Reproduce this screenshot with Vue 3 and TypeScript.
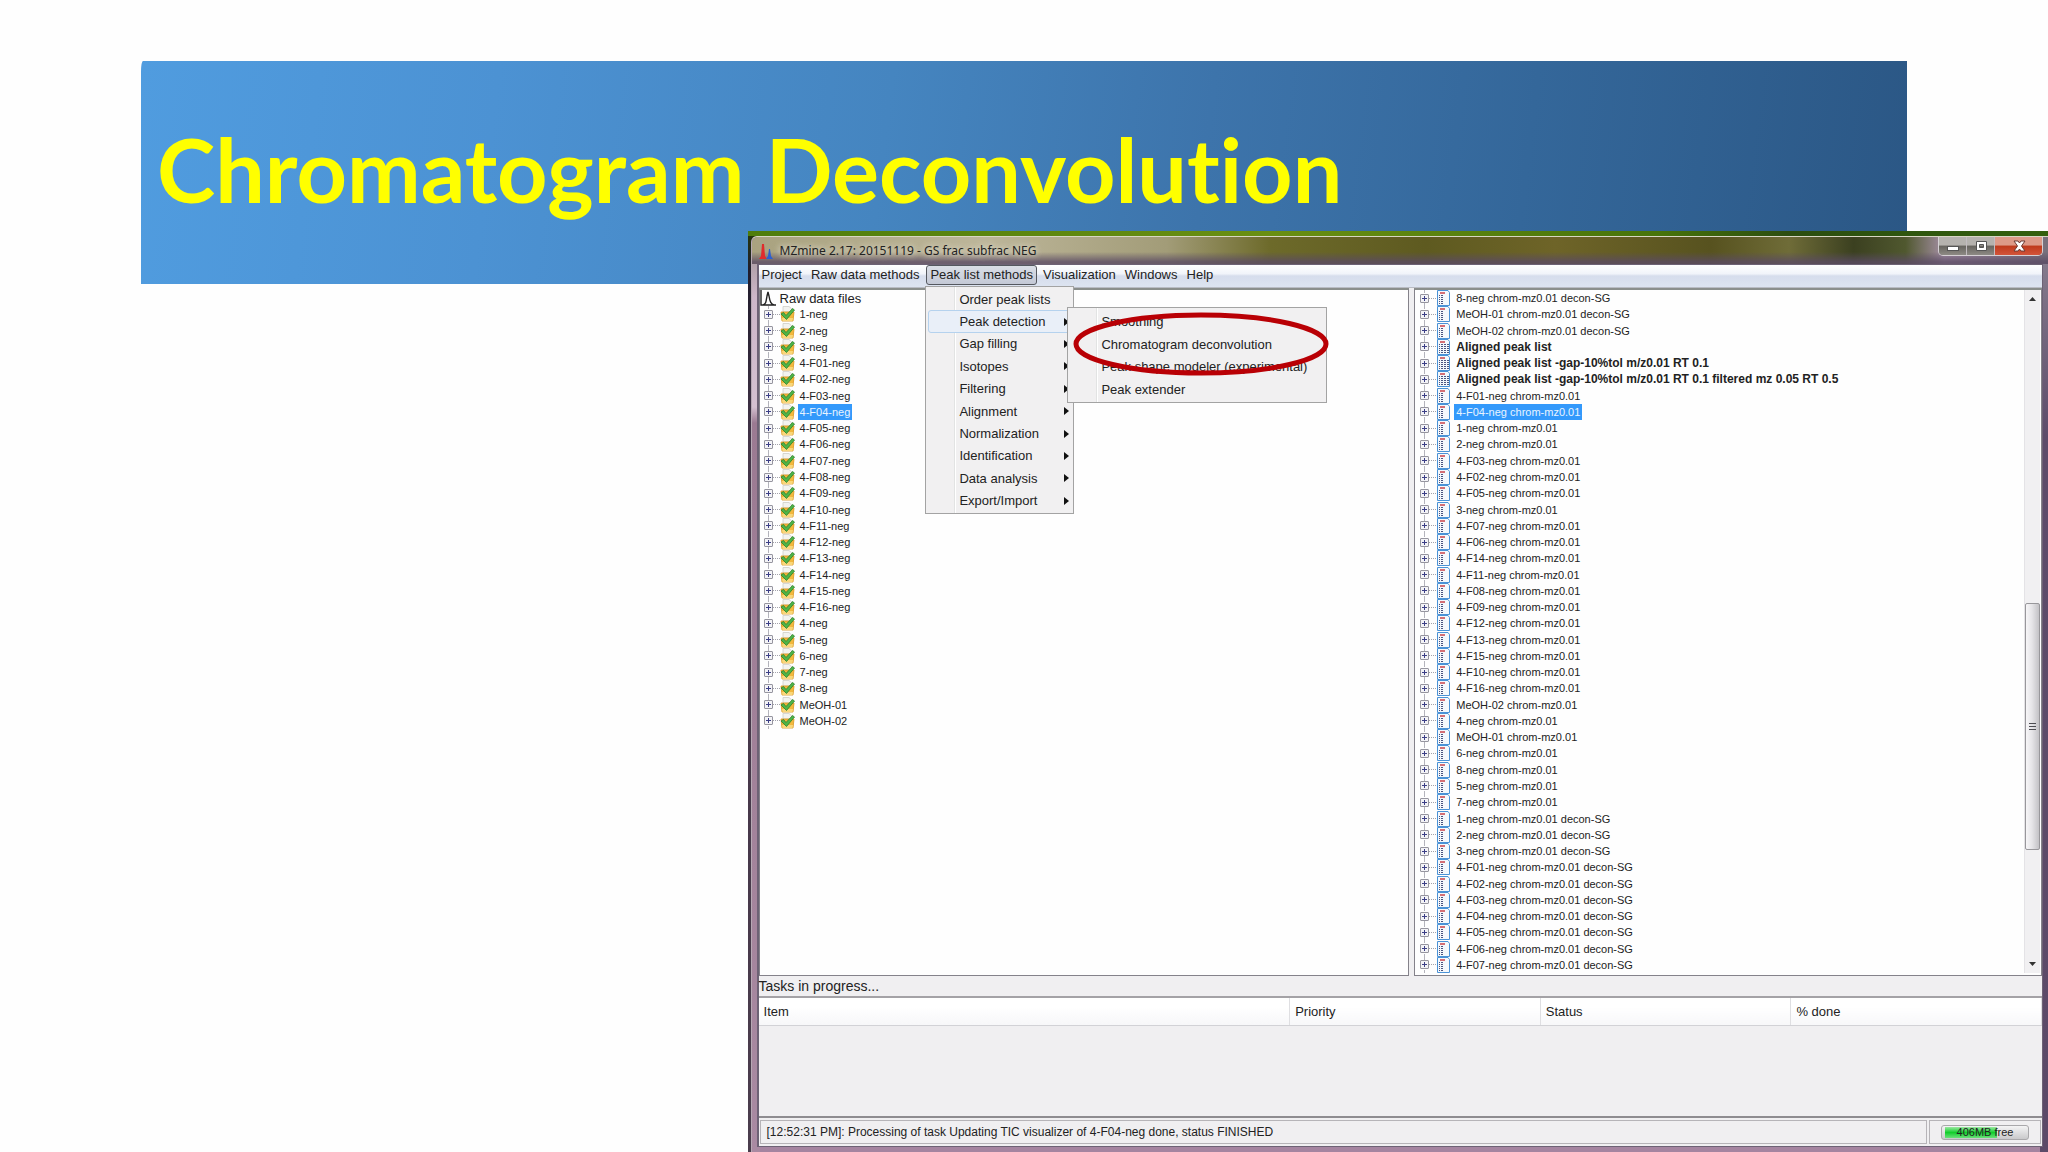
<script setup lang="ts">
import { ref } from 'vue'

interface PeakList {
  name: string
  aligned?: boolean
}

const rawFiles: string[] = [
  '1-neg', '2-neg', '3-neg',
  '4-F01-neg', '4-F02-neg', '4-F03-neg', '4-F04-neg', '4-F05-neg', '4-F06-neg',
  '4-F07-neg', '4-F08-neg', '4-F09-neg', '4-F10-neg', '4-F11-neg', '4-F12-neg',
  '4-F13-neg', '4-F14-neg', '4-F15-neg', '4-F16-neg',
  '4-neg', '5-neg', '6-neg', '7-neg', '8-neg', 'MeOH-01', 'MeOH-02',
]

const chrom = (sample: string): PeakList => ({ name: `${sample} chrom-mz0.01` })
const decon = (sample: string): PeakList => ({ name: `${sample} chrom-mz0.01 decon-SG` })

const peakLists: PeakList[] = [
  ...['8-neg', 'MeOH-01', 'MeOH-02'].map(decon),
  { name: 'Aligned peak list', aligned: true },
  { name: 'Aligned peak list -gap-10%tol m/z0.01 RT 0.1', aligned: true },
  { name: 'Aligned peak list -gap-10%tol m/z0.01 RT 0.1 filtered mz 0.05 RT 0.5', aligned: true },
  ...[
    '4-F01-neg', '4-F04-neg', '1-neg', '2-neg', '4-F03-neg', '4-F02-neg', '4-F05-neg', '3-neg',
    '4-F07-neg', '4-F06-neg', '4-F14-neg', '4-F11-neg', '4-F08-neg', '4-F09-neg', '4-F12-neg',
    '4-F13-neg', '4-F15-neg', '4-F10-neg', '4-F16-neg', 'MeOH-02', '4-neg', 'MeOH-01', '6-neg',
    '8-neg', '5-neg', '7-neg',
  ].map(chrom),
  ...[
    '1-neg', '2-neg', '3-neg', '4-F01-neg', '4-F02-neg', '4-F03-neg', '4-F04-neg', '4-F05-neg',
    '4-F06-neg', '4-F07-neg',
  ].map(decon),
]

const menus: string[] = ['Project', 'Raw data methods', 'Peak list methods', 'Visualization', 'Windows', 'Help']
const methodItems: string[] = [
  'Order peak lists', 'Peak detection', 'Gap filling', 'Isotopes', 'Filtering',
  'Alignment', 'Normalization', 'Identification', 'Data analysis', 'Export/Import',
]
const detectionItems: string[] = [
  'Smoothing', 'Chromatogram deconvolution', 'Peak shape modeler (experimental)', 'Peak extender',
]

const openMenu = ref('Peak list methods')
const hovered = ref('Peak detection')
const selectedFile = ref('4-F04-neg')
const selectedList = ref('4-F04-neg chrom-mz0.01')
const rowMarks: number[] = [5, 7, 9, 11, 13]
</script>

<template>
  <main class="slide">
    <header class="banner">
      <h1>Chromatogram Deconvolution</h1>
    </header>

    <section class="desktop" aria-label="MZmine">
      <div class="window">
        <div class="titlebar">
          <svg class="logo" viewBox="0 0 14 16" aria-hidden="true">
            <path d="M0 16 L2 13 L3 1 H5 L6 13 L8 16 Z" fill="#e02c2c" />
            <path d="M7 16 L9 13 L10 6 H11 L12 13 L14 16 Z" fill="#2c5fd0" />
          </svg>
          <span class="caption">MZmine 2.17: 20151119 - GS frac subfrac NEG</span>
          <div class="controls">
            <button type="button" class="control" aria-label="Minimize">
              <svg viewBox="0 0 16 12"><rect x="2.500" y="6.500" width="11" height="4" fill="#fff" stroke="#555" /></svg>
            </button>
            <button type="button" class="control" aria-label="Maximize">
              <svg viewBox="0 0 16 12"><path d="M3.500 1.500h10v9h-10z M6.500 4.500h4v3h-4z" fill="#fff" fill-rule="evenodd" stroke="#555" /></svg>
            </button>
            <button type="button" class="control close" aria-label="Close">
              <svg viewBox="0 0 16 12"><path d="M3 1h4l1.500 2L10 1h4l-3.500 5L14 11h-4L8.500 9 7 11H3l3.500-5z" fill="#fff" stroke="#6b3a34" /></svg>
            </button>
          </div>
        </div>

        <div class="client">
          <nav class="menubar">
            <div v-for="menu in menus" :key="menu" class="menu">
              <button type="button" class="menu-title" :class="{ open: menu === openMenu }" @click="openMenu = menu">{{ menu }}</button>
              <div v-if="menu === 'Peak list methods' && openMenu === menu" class="popup methods">
                <div v-for="item in methodItems" :key="item" class="entry" :class="{ hot: item === hovered }">
                  <button type="button" @mouseenter="hovered = item">{{ item }}</button>
                  <svg v-if="item !== 'Order peak lists'" class="arrow" viewBox="0 0 5 8"><path d="M0 0L5 4L0 8Z" fill="#111" /></svg>
                </div>
                <div v-if="hovered === 'Peak detection'" class="popup detection">
                  <div v-for="item in detectionItems" :key="item" class="entry">
                    <button type="button">{{ item }}</button>
                  </div>
                  <svg class="highlight" viewBox="0 0 256 64" preserveAspectRatio="none" aria-hidden="true">
                    <ellipse cx="128" cy="32" rx="125" ry="29" fill="none" stroke="#b90005" stroke-width="5" />
                  </svg>
                </div>
              </div>
            </div>
          </nav>

          <div class="panels">
            <ul class="tree files">
              <li class="root">
                <svg class="spectrum" viewBox="0 0 16 16" aria-hidden="true">
                  <path d="M1 0V15H16M3 15C6 14 6 12 7 6L8 2L9 6C10 12 11 14 14 15" fill="none" stroke="#222" stroke-width="1.400" />
                </svg>
                <span>Raw data files</span>
              </li>
              <li v-for="file in rawFiles" :key="file" class="node">
                <button type="button" class="expander" :aria-label="'Expand ' + file" />
                <svg class="icon" viewBox="0 0 15 16" aria-hidden="true">
                  <path d="M3 0.500H9L12 3V6H3Z" fill="#f3f3ef" stroke="#c9c9c0" stroke-width=".7" />
                  <path d="M1 6H14L13 15H2Z" fill="#f3b83c" stroke="#d89520" stroke-width=".8" />
                  <path d="M2 12H13L12.500 15H2.500Z" fill="#f9d77a" />
                  <path d="M1 8L3.500 6.500L6 9.500L12.500 2.500L14.500 4L6.500 13.500Z" fill="#4fb548" stroke="#2c7f2b" stroke-width=".8" />
                </svg>
                <span class="label" :class="{ selected: file === selectedFile }" @click="selectedFile = file">{{ file }}</span>
              </li>
            </ul>

            <div class="lists">
              <ul class="tree">
                <li v-for="list in peakLists" :key="list.name" class="node">
                  <button type="button" class="expander" :aria-label="'Expand ' + list.name" />
                  <svg class="icon" viewBox="0 0 15 16" aria-hidden="true">
                    <path d="M1.500 0.500H12L13.500 2.500V15.500H1.500Z" fill="#f4f8fc" stroke="#4a92d6" />
                    <path d="M4 3H9" stroke="#c4242c" stroke-width="1.300" />
                    <g v-for="y in rowMarks" :key="y" stroke="#4b5580">
                      <path :d="`M3 ${y + 0.5}H4M5 ${y + 0.5}H7`" />
                      <path v-if="list.aligned" :d="`M8 ${y + 0.5}H10M11 ${y + 0.5}H13`" />
                    </g>
                  </svg>
                  <span
                    class="label"
                    :class="{ selected: list.name === selectedList, aligned: list.aligned }"
                    @click="selectedList = list.name"
                  >{{ list.name }}</span>
                </li>
              </ul>
              <div class="scrollbar">
                <svg class="tick" viewBox="0 0 7 4"><path d="M0 4L3.500 0L7 4Z" fill="#333" /></svg>
                <div class="gap-above" />
                <div class="thumb"><i /><i /><i /></div>
                <div class="gap-below" />
                <svg class="tick" viewBox="0 0 7 4"><path d="M0 0L3.500 4L7 0Z" fill="#333" /></svg>
              </div>
            </div>
          </div>

          <h2 class="tasks-title">Tasks in progress...</h2>
          <div class="tasks">
            <table>
              <thead>
                <tr>
                  <th class="item" scope="col">Item</th>
                  <th scope="col">Priority</th>
                  <th scope="col">Status</th>
                  <th scope="col">% done</th>
                </tr>
              </thead>
            </table>
          </div>

          <footer class="statusbar">
            <p class="message">[12:52:31 PM]: Processing of task Updating TIC visualizer of 4-F04-neg done, status FINISHED</p>
            <div class="memory">
              <button type="button" class="meter"><span>406MB free</span></button>
            </div>
          </footer>
        </div>
      </div>
    </section>
  </main>
</template>

<style>
body {
  background: #fefefe;
}
</style>

<style scoped>
* {
  box-sizing: border-box;
}

button {
  margin: 0;
  padding: 0;
  border: 0;
  background: none;
  font: inherit;
  color: inherit;
}

.slide {
  display: flex;
  flex-direction: column;
  min-height: 100vh;
  padding-top: 61px;
  overflow: hidden;
  font-family: "Liberation Sans", Arial, sans-serif;
  font-size: 13px;
  color: #222;
}

.banner {
  display: flex;
  align-items: center;
  flex: none;
  height: 223px;
  margin: 0 141px;
  padding: 0 16px 8px;
  border-top-left-radius: 2px 10px;
  background: linear-gradient(97deg, #509cdf 0%, #4c92d3 20%, #4585c0 42%, #3d74ab 60%, #34679a 78%, #2b5785 100%);
}

h1 {
  margin: 0;
  font-family: Lato, sans-serif;
  font-size: 88px;
  font-weight: 700;
  font-variant-ligatures: none;
  line-height: 112px;
  white-space: nowrap;
  color: #ff0;
}

.desktop {
  position: relative;
  display: flex;
  flex: 1;
  margin-top: -53px;
  margin-left: 36.500%;
  padding: 5px 0 0 3px;
  background: linear-gradient(90deg, #4f7d0c 0%, #6a8f12 40%, #48740a 70%, #2c4d10 80%, #33600d 100%) top / 100% 5px no-repeat,
    linear-gradient(#26380a 0, #201c2c 40px, #433448 220px, #4a3c4c 100%);
}

.window {
  display: flex;
  flex-direction: column;
  flex: 1;
  min-width: 0;
  padding: 0 5px 5px;
  border-top: 1px solid #d8d6c4;
  border-left: 1px solid #b7a9b4;
  border-top-left-radius: 6px;
  background: linear-gradient(#9a8f90 0, #cdb6c9 60px, #d4c0d0 170px, #9b7a92 186px, #a98aa2 100%) left / 8px 100% no-repeat,
    linear-gradient(#8a8191 0, #5d4c6a 200px, #5c4a68 100%) right / 8px 100% no-repeat,
    #a584a0;
}

.titlebar {
  display: flex;
  align-items: center;
  flex: none;
  height: 27px;
  margin: 0 -5px;
  padding: 0 5px 0 7px;
  border-top-left-radius: 6px;
  background: linear-gradient(transparent 55%, #5a4a64cc 92%),
    linear-gradient(90deg, #a9a27f 0%, #bdb69a 18%, #a29c78 32%, #6d6a2a 40%, #5e5a20 52%, #6e6428 62%, #57521f 74%, #6f6c38 80%, #3b4020 85%, #50582f 89%, #a58fa5 92%, #77707c 100%);
}

.logo {
  width: 14px;
  height: 16px;
  margin-right: 7px;
}

.caption {
  font-family: "Noto Sans", "Open Sans", sans-serif;
  font-size: 12px;
  white-space: nowrap;
  text-shadow: 0 0 6px #dcd8c8, 0 0 6px #dcd8c8;
}

.controls {
  display: flex;
  align-self: flex-start;
  height: 19px;
  margin-left: auto;
  border: 1px solid #d5d0d4;
  border-top: 0;
  border-radius: 0 0 5px 5px;
  overflow: hidden;
}

.control {
  display: flex;
  align-items: center;
  justify-content: center;
  width: 28px;
  border-right: 1px solid #c2bcc0;
  background: linear-gradient(#b5b2ae 0 45%, #67645f 50%, #8d8a84);
}

.control svg {
  width: 16px;
  height: 12px;
}

.control.close {
  width: 47px;
  border-right: 0;
  background: linear-gradient(#dd9a88 0 45%, #bf3a1c 50%, #d2543a);
}

.client {
  display: flex;
  flex-direction: column;
  flex: 1;
  border: 1px solid #6d6275;
  border-left-width: 2px;
  background: #f0eff1;
}

.menubar {
  display: flex;
  flex: none;
  height: 23px;
  padding-bottom: 2px;
  border-bottom: 1px solid #b9bcc4;
  background: linear-gradient(#fff 0, #f1f4fa 40%, #d6ddec 50%, #dde4f1);
}

.menu {
  position: relative;
  display: flex;
}

.menu:first-child {
  margin-left: -1px;
}

.menu-title {
  padding: 0 4px;
  border: 0 solid transparent;
  border-width: 1px 0;
  line-height: 18px;
  white-space: nowrap;
}

.menu:not(:last-child) .menu-title {
  padding-right: 5px;
}

.menu .menu-title.open {
  margin: 0 2px;
  padding: 0 3px;
  border: 1px solid #55585f;
  border-radius: 3px;
  background: linear-gradient(#dadee6, #c4c9d6);
}

.popup {
  position: absolute;
  z-index: 2;
  display: grid;
  grid-auto-rows: 1fr;
  padding: 1px 2px;
  border: 1px solid #a3a3a3;
  background: linear-gradient(90deg, transparent 28px, #e2e3e3 28px 29px, #fff 29px 30px, transparent 30px) #f1f0f1;
}

.methods {
  top: 21px;
  left: 1px;
  width: 149px;
  height: 228px;
}

.detection {
  top: 20px;
  left: 141px;
  width: 260px;
  height: 96px;
  padding-top: 2px;
}

.entry {
  display: flex;
  align-items: center;
  min-height: 0;
  padding-left: 30px;
  border: 1px solid transparent;
  white-space: nowrap;
}

.entry.hot {
  border-color: #b5d2ee;
  border-radius: 3px;
  background: #e9eff8;
}

.arrow {
  width: 5px;
  height: 8px;
  margin-right: 1px;
  margin-left: auto;
}

.highlight {
  position: absolute;
  top: 4px;
  left: 5px;
  width: 256px;
  height: 64px;
}

.panels {
  display: flex;
  gap: 5px;
  flex: 1;
}

.tree {
  display: grid;
  grid-template-rows: repeat(42, 1fr);
  flex: 1;
  margin: 0;
  padding: 0;
  list-style: none;
  font-size: 11px;
}

.files,
.lists {
  border: 1px solid #84828a;
  border-top: 2px solid #8b8f8c;
  background: #fefefe;
}

.files {
  flex: 651 0 0;
}

.lists {
  display: flex;
  flex: 626 0 0;
  padding: 0 1px 2px;
}

.files.tree {
  padding-bottom: 2px;
}

.root,
.node {
  display: flex;
  align-items: center;
  min-height: 0;
  white-space: nowrap;
}

.root {
  gap: 4px;
  font-size: 13px;
}

.spectrum {
  width: 16px;
  height: 16px;
}

.node {
  position: relative;
  padding-left: 4px;
}

.node::before {
  content: "";
  position: absolute;
  top: 0;
  bottom: 0;
  left: 8px;
  border-left: 1px dashed #b4b4bc;
}

.node::after {
  content: "";
  width: 7px;
  order: 1;
  border-top: 1px dotted #a2a2aa;
}

.node .icon,
.node .label {
  order: 2;
}

.expander {
  position: relative;
  width: 9px;
  height: 9px;
  border: 1px solid #96959f;
  border-radius: 1px;
  background: linear-gradient(#3c3f86, #3c3f86) center / 5px 1px no-repeat,
    linear-gradient(#3c3f86, #3c3f86) center / 1px 5px no-repeat,
    #f3f3f6;
}

.icon {
  width: 15px;
  height: 16px;
}

.label {
  align-self: stretch;
  display: flex;
  align-items: center;
  margin-left: 3px;
  padding: 0 2px;
}

.selected {
  background: #3399fb;
  color: #e9f4ff;
}

.aligned {
  font-size: 12px;
  font-weight: 700;
}

.scrollbar {
  display: flex;
  flex-direction: column;
  align-items: center;
  width: 16px;
  padding: 7px 0;
  border-left: 1px solid #e4e3e6;
  background: #f1f0f2;
}

.tick {
  width: 7px;
  height: 4px;
}

.gap-above {
  flex: 303;
}

.gap-below {
  flex: 112;
}

.thumb {
  display: flex;
  flex: 246;
  flex-direction: column;
  align-items: center;
  justify-content: center;
  gap: 2px;
  width: 15px;
  border: 1px solid #98979b;
  border-radius: 2px;
  background: linear-gradient(90deg, #f7f6f8, #e6e5e8 45%, #c3c2c6);
}

.thumb i {
  width: 7px;
  height: 1px;
  background: #4c4c52;
}

.tasks-title {
  flex: none;
  margin: 0;
  font-size: 14px;
  font-weight: 400;
  line-height: 20px;
}

.tasks {
  flex: none;
  height: 122px;
  border-top: 2px solid #a4a2a6;
  border-bottom: 2px solid #8e8c90;
}

table {
  width: 100%;
  border-collapse: collapse;
  table-layout: fixed;
}

th {
  height: 27px;
  padding: 1px 5px 0;
  border-right: 1px solid #dfdfe2;
  border-bottom: 1px solid #d2d2d6;
  background: linear-gradient(#fff 0 35%, #f7f7f9);
  font-size: 13px;
  font-weight: 400;
  line-height: 20px;
  text-align: left;
}

.item {
  width: 41.400%;
}

.statusbar {
  display: flex;
  gap: 2px;
  flex: none;
  height: 28px;
  padding: 2px 1px;
}

.message {
  display: flex;
  align-items: center;
  flex: 1;
  margin: 0;
  padding-left: 6px;
  border: 1px solid #b6b4b8;
  font-size: 12px;
  white-space: nowrap;
}

.memory {
  display: flex;
  align-items: center;
  justify-content: center;
  width: 112px;
  border: 1px solid #b6b4b8;
}

.meter {
  width: 88px;
  height: 15px;
  border: 1px solid #a9a8ab;
  border-radius: 3px;
  background: linear-gradient(#9be8a2, #12ce2c 50%, #6be07a) 3px center / 52px 11px no-repeat,
    linear-gradient(#f4f4f5, #c9c9cb);
  font-size: 11px;
  line-height: 13px;
}
</style>
